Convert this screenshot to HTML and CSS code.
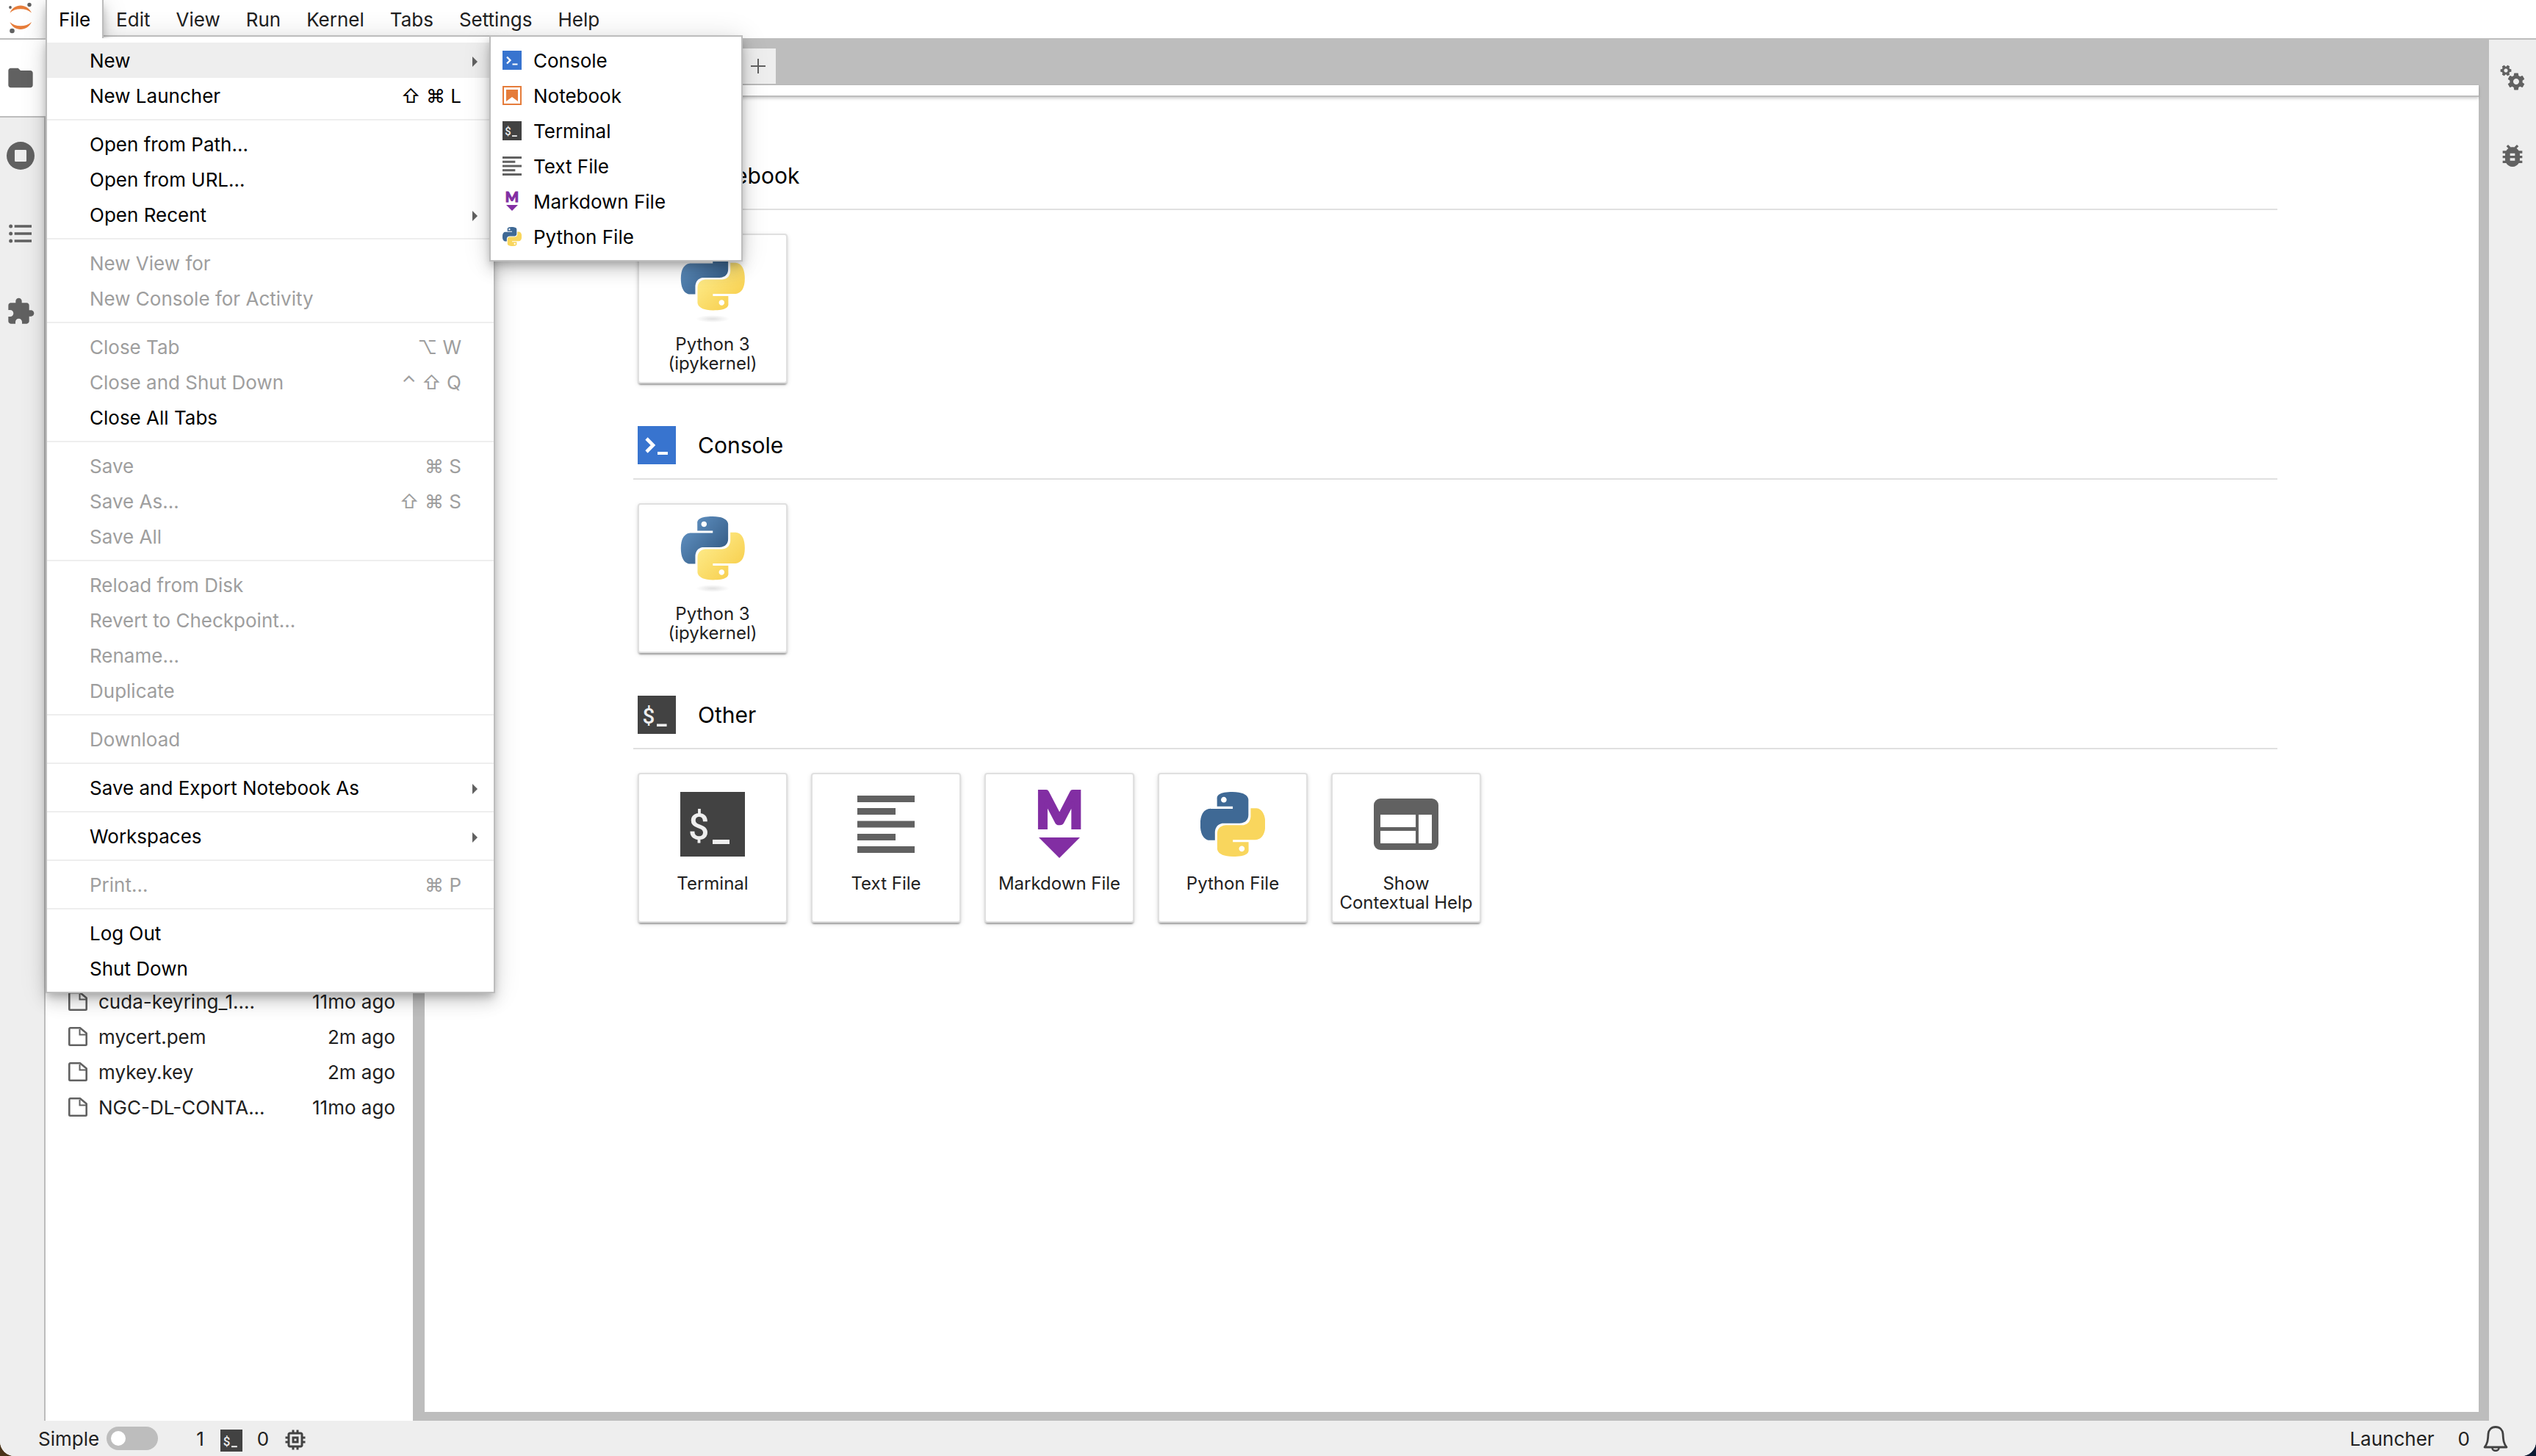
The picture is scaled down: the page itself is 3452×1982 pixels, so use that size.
FILE: index.html
```html
<!DOCTYPE html>
<html lang="en">
<head>
    <meta charset="UTF-8">
    <meta name="viewport" content="width=device-width, initial-scale=1.0">
    <title>JupyterLab</title>
    <link rel="stylesheet" href="styles.css">
</head>
<body>
    <!-- Icon definitions -->
    <svg class="defs" width="0" height="0" aria-hidden="true">
        <defs>
            <linearGradient id="pyBlue" x1="0" y1="0.1" x2="0.8" y2="0.8">
                <stop offset="0" stop-color="#6496c8"/>
                <stop offset="1" stop-color="#38608a"/>
            </linearGradient>
            <linearGradient id="pyYellow" x1="0.2" y1="0.2" x2="0.8" y2="0.8">
                <stop offset="0" stop-color="#fde985"/>
                <stop offset="1" stop-color="#f8d152"/>
            </linearGradient>
            <radialGradient id="pyShadow">
                <stop offset="0" stop-color="#000" stop-opacity="0.12"/>
                <stop offset="1" stop-color="#000" stop-opacity="0"/>
            </radialGradient>
            <path id="py-top" d="M14.25.18l.9.2.73.26.59.3.45.32.34.34.25.34.16.33.1.3.04.26.02.2-.01.13V8.5l-.05.63-.13.55-.21.46-.26.38-.3.31-.33.25-.35.19-.35.14-.33.1-.3.07-.26.04-.21.02H8.77l-.69.05-.59.14-.5.22-.41.27-.33.32-.27.35-.2.36-.15.37-.1.35-.07.32-.04.27-.02.21v3.06H3.17l-.21-.03-.28-.07-.32-.12-.35-.18-.36-.26-.36-.36-.35-.46-.32-.59-.28-.73-.21-.88-.14-1.05-.05-1.23.06-1.22.16-1.04.24-.87.32-.71.36-.57.4-.44.42-.33.42-.24.4-.16.36-.1.32-.05.24-.01h.16l.06.01h8.16v-.83H6.18l-.01-2.75-.02-.37.05-.34.11-.31.17-.28.25-.26.31-.23.38-.2.44-.18.51-.15.58-.12.64-.1.71-.06.77-.04.84-.02 1.27.05zm-6.3 1.98l-.23.33-.08.41.08.41.23.34.33.22.41.09.41-.09.33-.22.23-.34.08-.41-.08-.41-.23-.33-.33-.22-.41-.09-.41.09z"/>
            <path id="py-bottom" d="M21.1 6.11l.28.06.32.12.35.18.36.27.36.35.35.47.32.59.28.73.21.88.14 1.04.05 1.23-.06 1.23-.16 1.04-.24.86-.32.71-.36.57-.4.45-.42.33-.42.24-.4.16-.36.09-.32.05-.24.02-.16-.01h-8.22v.82h5.84l.01 2.76.02.36-.05.34-.11.31-.17.29-.25.25-.31.24-.38.2-.44.17-.51.15-.58.13-.64.09-.71.07-.77.04-.84.01-1.27-.04-1.07-.14-.9-.2-.73-.25-.59-.3-.45-.33-.34-.34-.25-.34-.16-.33-.1-.3-.04-.25-.02-.2.01-.13v-5.34l.05-.64.13-.54.21-.46.26-.38.3-.32.33-.24.35-.2.35-.14.33-.1.3-.06.26-.04.21-.02.13-.01h5.84l.69-.05.59-.14.5-.21.41-.28.33-.32.27-.35.2-.36.15-.36.1-.35.07-.32.04-.28.02-.21V6.07h2.09l.14.01zm-6.47 14.25l-.23.33-.08.41.08.41.23.33.33.23.41.08.41-.08.33-.23.23-.33.08-.41-.08-.41-.23-.33-.33-.23-.41-.08-.41.08z"/>
            <path id="gear" d="M19.43 12.98c.04-.32.07-.64.07-.98s-.03-.66-.07-.98l2.11-1.65c.19-.15.24-.42.12-.64l-2-3.46c-.12-.22-.39-.3-.61-.22l-2.49 1c-.52-.4-1.08-.73-1.69-.98l-.38-2.65C14.46 2.18 14.25 2 14 2h-4c-.25 0-.46.18-.49.42l-.38 2.65c-.61.25-1.17.59-1.69.98l-2.49-1c-.23-.09-.49 0-.61.22l-2 3.46c-.13.22-.07.49.12.64l2.11 1.65c-.04.32-.07.65-.07.98s.03.66.07.98l-2.11 1.65c-.19.15-.24.42-.12.64l2 3.46c.12.22.39.3.61.22l2.49-1c.52.4 1.08.73 1.69.98l.38 2.65c.03.24.24.42.49.42h4c.25 0 .46-.18.49-.42l.38-2.65c.61-.25 1.17-.59 1.69-.98l2.49 1c.23.09.49 0 .61-.22l2-3.46c.12-.22.07-.49-.12-.64l-2.11-1.65zM12 15.5c-1.93 0-3.5-1.57-3.5-3.5s1.57-3.5 3.5-3.5 3.5 1.57 3.5 3.5-1.57 3.5-3.5 3.5z"/>
        </defs>
        <symbol id="i-python" viewBox="0 0 24 24">
            <use href="#py-top" fill="#3f6995"/>
            <use href="#py-bottom" fill="#f9d65d"/>
        </symbol>
        <symbol id="i-kernel" viewBox="0 0 104 104">
            <g transform="translate(9 9) scale(3.6)">
                <use href="#py-top" fill="url(#pyBlue)"/>
                <use href="#py-bottom" fill="url(#pyYellow)"/>
            </g>
            <ellipse cx="52" cy="107" rx="23" ry="5" fill="url(#pyShadow)"/>
        </symbol>
        <symbol id="i-console" viewBox="0 0 52 52">
            <rect width="52" height="52" fill="#3874cf"/>
            <path d="M12 17l9 9-9 9" fill="none" stroke="#fff" stroke-width="4.6"/>
            <rect x="27" y="35" width="14" height="4" fill="#fff"/>
        </symbol>
        <symbol id="i-notebook" viewBox="0 0 52 52">
            <path fill="#e57c3a" d="M0 0h52v52H0zM4 4v44h44V4z" fill-rule="evenodd"/>
            <path fill="#e57c3a" d="M10 10h32v32L26 30 10 42z"/>
        </symbol>
        <symbol id="i-text" viewBox="0 0 78 78">
            <path fill="#616161" d="M0 0h78v9H0zM0 17h52v9H0zM0 34.500h78v9H0zM0 52h52v9H0zM0 69h78v9H0z"/>
        </symbol>
        <symbol id="i-help" viewBox="0 0 88 70">
            <path fill="#616161" fill-rule="evenodd" d="M9 0h70a9 9 0 0 1 9 9v52a9 9 0 0 1-9 9H9a9 9 0 0 1-9-9V9a9 9 0 0 1 9-9zM9 22v17h48V22zM9 44v17h48V44zM61 22v39h18V22z"/>
        </symbol>
        <symbol id="i-folder" viewBox="0 0 24 24"><path d="M10 4H4c-1.100 0-1.990.9-1.990 2L2 18c0 1.100.9 2 2 2h16c1.100 0 2-.9 2-2V8c0-1.100-.9-2-2-2h-8l-2-2z"/></symbol>
        <symbol id="i-running" viewBox="0 0 24 24"><path fill-rule="evenodd" d="M12 .6a11.400 11.400 0 1 0 0 22.800 11.400 11.400 0 0 0 0-22.800zM8 7.200h8a.8.8 0 0 1 .8.8v8a.8.8 0 0 1-.8.8H8a.8.8 0 0 1-.8-.8V8a.8.8 0 0 1 .8-.8z"/></symbol>
        <symbol id="i-toc" viewBox="0 0 24 24"><path d="M7 5h14v2H7zM7 11h14v2H7zM7 17h14v2H7z"/><circle cx="4" cy="6" r="1.500"/><circle cx="4" cy="12" r="1.500"/><circle cx="4" cy="18" r="1.500"/></symbol>
        <symbol id="i-extension" viewBox="0 0 24 24"><path d="M20.500 11H19V7c0-1.100-.9-2-2-2h-4V3.500C13 2.120 11.880 1 10.500 1S8 2.120 8 3.500V5H4c-1.100 0-1.990.9-1.990 2v3.800H3.500c1.490 0 2.700 1.210 2.700 2.700s-1.210 2.700-2.700 2.700H2V20c0 1.100.9 2 2 2h3.800v-1.500c0-1.490 1.210-2.700 2.700-2.700 1.490 0 2.700 1.210 2.700 2.700V22H17c1.100 0 2-.9 2-2v-4h1.500c1.380 0 2.500-1.120 2.500-2.500S21.880 11 20.500 11z"/></symbol>
        <symbol id="i-gears" viewBox="0 0 40 40">
            <use href="#gear" transform="translate(11.200 11.200) scale(1.150)"/>
            <use href="#gear" transform="translate(11 10) rotate(30) scale(.74) translate(-12 -12)"/>
        </symbol>
        <symbol id="i-bug" viewBox="0 0 24 24"><path d="M20 8h-2.810c-.45-.78-1.070-1.450-1.820-1.960L17 4.410 15.590 3l-2.170 2.170C12.960 5.060 12.490 5 12 5c-.49 0-.96.06-1.410.17L8.410 3 7 4.410l1.620 1.630C7.880 6.550 7.260 7.220 6.810 8H4v2h2.090c-.05.33-.09.66-.09 1v1H4v2h2v1c0 .34.04.67.09 1H4v2h2.810c1.040 1.790 2.970 3 5.190 3s4.150-1.210 5.190-3H20v-2h-2.090c.05-.33.09-.66.09-1v-1h2v-2h-2v-1c0-.34-.04-.67-.09-1H20V8zm-6 8h-4v-2h4v2zm0-4h-4v-2h4v2z"/></symbol>
        <symbol id="i-chip" viewBox="0 0 24 24"><path d="M15 9H9v6h6V9zm-2 4h-2v-2h2v2zm8-2V9h-2V7c0-1.100-.9-2-2-2h-2V3h-2v2h-2V3H9v2H7c-1.100 0-2 .9-2 2v2H3v2h2v2H3v2h2v2c0 1.100.9 2 2 2h2v2h2v-2h2v2h2v-2h2c1.100 0 2-.9 2-2v-2h2v-2h-2v-2h2zm-4 6H7V7h10v10z"/></symbol>
        <symbol id="i-file" viewBox="0 0 26 26">
            <path fill="none" stroke="#616161" stroke-width="2.600" stroke-linejoin="round" d="M2.800 1.300h13.200L24.700 8.500v15a1.200 1.200 0 0 1-1.200 1.200H2.500a1.200 1.200 0 0 1-1.200-1.200V2.800a1.500 1.500 0 0 1 1.500-1.500z"/>
            <path fill="none" stroke="#616161" stroke-width="2" d="M15.500 3v7.500H24"/>
        </symbol>
        <symbol id="i-bell" viewBox="0 0 34 36">
            <path fill="none" stroke="#424242" stroke-width="2.800" stroke-linejoin="round" d="M17 2.500c-6 0-9.500 4-10 9.500C6.500 21 6 25 2 30h30c-4-5-4.500-9-5-18-.5-5.500-4-9.500-10-9.500z"/>
            <path fill="none" stroke="#424242" stroke-width="2.600" d="M12.500 31a4.500 3.800 0 0 0 9 0"/>
        </symbol>
        <symbol id="i-caret" viewBox="0 0 7 14"><path fill="#616161" d="M0 0l7 7-7 7z"/></symbol>
    </svg>

    <div class="app">
        <header class="top">
            <svg class="logo" viewBox="0 0 56 48" aria-hidden="true">
                <path fill="#e77d3a" d="M13.500 17.500C16 11 22 7.500 28 7.500S40 11 43 17.500C39 14 34 12.300 28 12.300S17 14 13.500 17.500z"/>
                <path fill="#e77d3a" d="M13.500 30C16 36.500 22 40 28 40s12-3.500 15-10c-4 3.500-9 5.200-15 5.200S17 33.500 13.500 30z"/>
                <circle cx="14" cy="10" r="1.900" fill="#616161"/>
                <circle cx="40" cy="6.500" r="2.700" fill="#616161"/>
                <circle cx="16.500" cy="42" r="3.300" fill="#616161"/>
            </svg>
            <nav class="menubar">
                <button class="menubar-item active">File</button>
                <button class="menubar-item">Edit</button>
                <button class="menubar-item">View</button>
                <button class="menubar-item">Run</button>
                <button class="menubar-item">Kernel</button>
                <button class="menubar-item">Tabs</button>
                <button class="menubar-item">Settings</button>
                <button class="menubar-item">Help</button>

                <div class="menu file-menu">
                    <button class="menu-item hover">New<svg class="caret"><use href="#i-caret"/></svg></button>
                    <button class="menu-item">New Launcher<kbd>⇧ ⌘ L</kbd></button>
                    <hr>
                    <button class="menu-item">Open from Path…</button>
                    <button class="menu-item">Open from URL…</button>
                    <button class="menu-item">Open Recent<svg class="caret"><use href="#i-caret"/></svg></button>
                    <hr>
                    <button class="menu-item" disabled>New View for</button>
                    <button class="menu-item" disabled>New Console for Activity</button>
                    <hr>
                    <button class="menu-item" disabled>Close Tab<kbd>⌥ W</kbd></button>
                    <button class="menu-item" disabled>Close and Shut Down<kbd>⌃ ⇧ Q</kbd></button>
                    <button class="menu-item">Close All Tabs</button>
                    <hr>
                    <button class="menu-item" disabled>Save<kbd>⌘ S</kbd></button>
                    <button class="menu-item" disabled>Save As…<kbd>⇧ ⌘ S</kbd></button>
                    <button class="menu-item" disabled>Save All</button>
                    <hr>
                    <button class="menu-item" disabled>Reload from Disk</button>
                    <button class="menu-item" disabled>Revert to Checkpoint…</button>
                    <button class="menu-item" disabled>Rename…</button>
                    <button class="menu-item" disabled>Duplicate</button>
                    <hr>
                    <button class="menu-item" disabled>Download</button>
                    <hr>
                    <button class="menu-item">Save and Export Notebook As<svg class="caret"><use href="#i-caret"/></svg></button>
                    <hr>
                    <button class="menu-item">Workspaces<svg class="caret"><use href="#i-caret"/></svg></button>
                    <hr>
                    <button class="menu-item" disabled>Print…<kbd>⌘ P</kbd></button>
                    <hr>
                    <button class="menu-item">Log Out</button>
                    <button class="menu-item">Shut Down</button>
                </div>

                <div class="menu new-menu">
                    <button class="menu-item"><svg><use href="#i-console"/></svg>Console</button>
                    <button class="menu-item"><svg><use href="#i-notebook"/></svg>Notebook</button>
                    <button class="menu-item">
                        <svg viewBox="0 0 88 88"><rect width="88" height="88" fill="#424242"/><text class="icon-dollar" x="11" y="65">$</text><rect x="44" y="65" width="23" height="6" fill="#eee"/></svg>Terminal
                    </button>
                    <button class="menu-item"><svg><use href="#i-text"/></svg>Text File</button>
                    <button class="menu-item">
                        <svg class="md" viewBox="0 0 92 92"><text class="icon-m" x="46" y="51" text-anchor="middle">M</text><path fill="#822ea3" d="M18 64h56L46 92z"/></svg>Markdown File
                    </button>
                    <button class="menu-item"><svg><use href="#i-python"/></svg>Python File</button>
                </div>
            </nav>
        </header>

        <div class="workspace">
            <aside class="sidebar left">
                <button class="side-tab current" aria-label="File Browser"><svg><use href="#i-folder"/></svg></button>
                <button class="side-tab" aria-label="Running Terminals and Kernels"><svg><use href="#i-running"/></svg></button>
                <button class="side-tab" aria-label="Table of Contents"><svg><use href="#i-toc"/></svg></button>
                <button class="side-tab" aria-label="Extension Manager"><svg><use href="#i-extension"/></svg></button>
            </aside>

            <section class="browser">
                <ul class="files">
                    <li><svg><use href="#i-file"/></svg><span class="name">cuda-keyring_1....</span><span>11mo ago</span></li>
                    <li><svg><use href="#i-file"/></svg><span class="name">mycert.pem</span><span>2m ago</span></li>
                    <li><svg><use href="#i-file"/></svg><span class="name">mykey.key</span><span>2m ago</span></li>
                    <li><svg><use href="#i-file"/></svg><span class="name">NGC-DL-CONTA...</span><span>11mo ago</span></li>
                </ul>
            </section>

            <main class="dock">
                <div class="tabbar">
                    <div class="tab"></div>
                    <button class="add" aria-label="New Launcher"><svg viewBox="0 0 20 20"><path stroke="#616161" stroke-width="2" d="M10 0v20M0 10h20"/></svg></button>
                </div>
                <div class="toolbar"></div>
                <div class="launcher">
                    <section>
                        <h2><svg><use href="#i-notebook"/></svg>Notebook</h2>
                        <div class="cards">
                            <button class="card"><svg class="kernel"><use href="#i-kernel"/></svg><span>Python 3 (ipykernel)</span></button>
                        </div>
                    </section>
                    <section>
                        <h2><svg><use href="#i-console"/></svg>Console</h2>
                        <div class="cards">
                            <button class="card"><svg class="kernel"><use href="#i-kernel"/></svg><span>Python 3 (ipykernel)</span></button>
                        </div>
                    </section>
                    <section>
                        <h2><svg viewBox="0 0 88 88"><rect width="88" height="88" fill="#424242"/><text class="icon-dollar" x="11" y="65">$</text><rect x="44" y="65" width="23" height="6" fill="#eee"/></svg>Other</h2>
                        <div class="cards">
                            <button class="card">
                                <svg viewBox="0 0 88 88"><rect width="88" height="88" fill="#424242"/><text class="icon-dollar" x="11" y="65">$</text><rect x="44" y="65" width="23" height="6" fill="#eee"/></svg>
                                <span>Terminal</span>
                            </button>
                            <button class="card"><svg class="lines"><use href="#i-text"/></svg><span>Text File</span></button>
                            <button class="card">
                                <svg class="md" viewBox="0 0 92 92"><text class="icon-m" x="46" y="51" text-anchor="middle">M</text><path fill="#822ea3" d="M18 64h56L46 92z"/></svg>
                                <span>Markdown File</span>
                            </button>
                            <button class="card"><svg><use href="#i-python"/></svg><span>Python File</span></button>
                            <button class="card"><svg><use href="#i-help"/></svg><span>Show Contextual Help</span></button>
                        </div>
                    </section>
                </div>
            </main>

            <aside class="sidebar right">
                <button class="side-tab" aria-label="Property Inspector"><svg><use href="#i-gears"/></svg></button>
                <button class="side-tab" aria-label="Debugger"><svg><use href="#i-bug"/></svg></button>
            </aside>
        </div>

        <footer class="status">
            <label for="simple">Simple</label>
            <input type="checkbox" role="switch" id="simple" class="switch">
            <span>1</span>
            <svg class="term" viewBox="0 0 88 88"><rect width="88" height="88" fill="#424242"/><text class="icon-dollar" x="11" y="65">$</text><rect x="44" y="65" width="23" height="6" fill="#eee"/></svg>
            <span>0</span>
            <svg class="chip"><use href="#i-chip"/></svg>
            <span class="mode">Launcher</span>
            <span>0</span>
            <svg class="bell"><use href="#i-bell"/></svg>
        </footer>
    </div>
</body>
</html>
```

FILE: styles.css
```css
* {
    box-sizing: border-box;
}

body {
    margin: 0;
    background: linear-gradient(90deg, #4a3319 50%, #0c1c33 50%);
    font-family: Inter, "Liberation Sans", sans-serif;
    font-size: 26px;
    color: #212121;
}

button {
    border: none;
    margin: 0;
    padding: 0;
    background: none;
    font: inherit;
    color: inherit;
}

svg {
    display: block;
    flex: none;
}

.defs {
    position: absolute;
}

.icon-dollar {
    font: 500 50px Roboto, sans-serif;
    fill: #eee;
}

.icon-m {
    font: 900 68px Lato, sans-serif;
    fill: #822ea3;
    stroke: #822ea3;
    stroke-width: 4px;
}

.md {
    overflow: visible;
}

.app {
    display: flex;
    flex-direction: column;
    height: 100vh;
    background-color: #fff;
    border-radius: 0 0 20px 20px;
    overflow: hidden;
}

/* Top bar and menus */
.top {
    display: flex;
    height: 54px;
    flex: none;
    border-bottom: 2px solid #bdbdbd;
    position: relative;
    z-index: 2;
}

.logo {
    width: 56px;
    height: 48px;
    margin-right: 6px;
}

.menubar {
    display: flex;
    position: relative;
}

.menubar-item {
    height: 52px;
    margin-right: -1px;
    padding: 0 16px;
    border: solid transparent;
    border-width: 0 2px;
}

.menubar-item.active {
    position: relative;
    z-index: 3;
    background-color: #fff;
    border-color: #bdbdbd;
    color: #000;
    box-shadow: 0 6px 10px -2px rgba(0, 0, 0, 0.2), 0 12px 20px rgba(0, 0, 0, 0.14), 0 2px 36px rgba(0, 0, 0, 0.12);
    clip-path: inset(0 -60px 0 -60px);
}

.menu {
    position: absolute;
    top: 48px;
    padding: 8px 0;
    background-color: #fff;
    border: 2px solid #bdbdbd;
    color: #000;
    box-shadow: 0 6px 10px -2px rgba(0, 0, 0, 0.2), 0 12px 20px rgba(0, 0, 0, 0.14), 0 2px 36px rgba(0, 0, 0, 0.12);
}

.file-menu {
    left: 0;
    width: 612px;
    z-index: 2;
}

.new-menu {
    left: 604px;
    width: 345px;
    z-index: 4;
}

.menu-item {
    display: flex;
    align-items: center;
    width: 100%;
    height: 48px;
    padding: 0 44px 0 58px;
    text-align: left;
    white-space: nowrap;
}

.menu-item.hover {
    background-color: #eee;
}

.menu-item:disabled {
    color: #9e9e9e;
}

.menu-item kbd {
    margin-left: auto;
    font-family: Inter, "DejaVu Sans", sans-serif;
}

.menu-item .caret {
    width: 7px;
    height: 14px;
    margin: 4px -22px 0 auto;
}

.menu hr {
    margin: 8px 0;
    border: none;
    border-top: 2px solid #eee;
}

.new-menu .menu-item {
    padding: 0 16px;
    gap: 16px;
}

.new-menu svg {
    width: 26px;
    height: 26px;
}

/* Work area */
.workspace {
    display: flex;
    flex: 1;
    min-height: 0;
}

.sidebar {
    flex: none;
    background-color: #eee;
    fill: #616161;
}

.left {
    width: 62px;
    border-right: 2px solid #bdbdbd;
}

.right {
    width: 64px;
}

.side-tab {
    display: flex;
    align-items: center;
    width: 100%;
    height: 106px;
    padding: 0 12px 2px;
}

.left .side-tab {
    padding: 0 8px 2px;
}

.side-tab.current {
    width: 62px;
    background-color: #fff;
    border-bottom: 2px solid #bdbdbd;
    padding-bottom: 0;
}

.side-tab svg {
    width: 40px;
    height: 40px;
}

.browser {
    flex: none;
    width: 500px;
    overflow: hidden;
}

.files {
    list-style: none;
    margin: 0;
    padding: 1285px 24px 0 31px;
}

.files li {
    display: flex;
    align-items: center;
    height: 48px;
    gap: 15px;
}

.files svg {
    width: 26px;
    height: 26px;
}

.files .name {
    flex: 1;
}

.dock {
    display: flex;
    flex-direction: column;
    flex: 1;
    background-color: #fff;
    border: solid #bdbdbd;
    border-width: 0 14px 12px 16px;
}

.tabbar {
    display: flex;
    flex: none;
    height: 62px;
    padding: 12px 0 2px;
    background-color: #bdbdbd;
}

.tab {
    width: 430px;
    background-color: #fff;
}

.add {
    display: flex;
    align-items: center;
    justify-content: center;
    width: 48px;
    background-color: #eee;
}

.add svg {
    width: 20px;
    height: 20px;
}

.toolbar {
    flex: none;
    height: 16px;
    border-bottom: 2px solid #bdbdbd;
    box-shadow: 0 2px 4px rgba(0, 0, 0, 0.2);
}

.launcher {
    padding: 75px 274px 0 284px;
}

.launcher section {
    margin-bottom: 52px;
}

.launcher h2 {
    display: flex;
    align-items: center;
    gap: 30px;
    height: 79px;
    margin: 0 0 32px;
    padding: 0 0 13px 6px;
    border-bottom: 2px solid #e0e0e0;
    font-size: 30px;
    font-weight: 400;
    color: #000;
}

.launcher h2 svg {
    width: 52px;
    height: 52px;
}

.cards {
    display: flex;
    gap: 32px;
    padding-left: 6px;
}

.card {
    display: flex;
    flex-direction: column;
    align-items: center;
    width: 204px;
    height: 204px;
    padding: 0 6px;
    border: 2px solid #e0e0e0;
    border-radius: 4px;
    background-color: #fff;
    font-size: 24px;
    line-height: 26px;
    box-shadow: 0 4px 2px -2px rgba(0, 0, 0, 0.2), 0 2px 2px rgba(0, 0, 0, 0.14), 0 2px 6px rgba(0, 0, 0, 0.12);
}

.card svg {
    width: 88px;
    height: 88px;
    margin: 24px 0;
}

.card svg.kernel {
    width: 104px;
    height: 104px;
    margin: 7px 0 25px;
    overflow: visible;
}

#i-kernel {
    overflow: visible;
}

.card svg.lines {
    width: 78px;
    height: 78px;
    margin: 29px 0;
}

.card svg.md {
    width: 92px;
    height: 92px;
    margin: 22px 0;
}

/* Status bar */
.status {
    display: flex;
    align-items: center;
    flex: none;
    height: 48px;
    padding: 0 38px 0 52px;
    background-color: #eee;
}

.switch {
    appearance: none;
    display: flex;
    align-items: center;
    width: 70px;
    height: 32px;
    margin: 0 52px 0 10px;
    padding: 0 6px;
    border-radius: 16px;
    background-color: #bdbdbd;
}

.switch::before {
    content: "";
    width: 20px;
    height: 20px;
    border-radius: 10px;
    background-color: #fff;
}

.term {
    width: 30px;
    height: 30px;
    margin: 6px 20px 0 22px;
}

.chip {
    width: 36px;
    height: 36px;
    margin: 4px auto 0 18px;
    fill: #424242;
}

.mode {
    margin-right: 32px;
}

.bell {
    width: 34px;
    height: 36px;
    margin-left: 18px;
}
```
